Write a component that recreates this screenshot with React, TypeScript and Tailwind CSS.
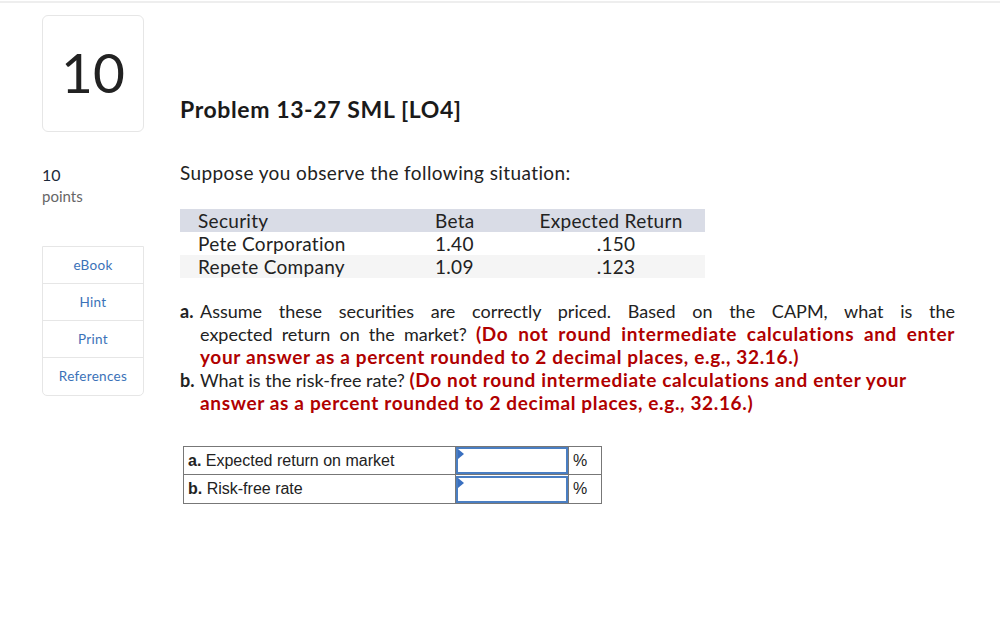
import React from 'react'

const sans = { fontFamily: 'Lato, "Open Sans", sans-serif' }
const arial = { fontFamily: '"Liberation Sans", Arial, sans-serif' }

const rows = [
  { name: 'Pete Corporation', beta: '1.40', ret: '.150', bg: 'bg-white' },
  { name: 'Repete Company', beta: '1.09', ret: '.123', bg: 'bg-[#f5f5f5]' },
]

const tools = ['eBook', 'Hint', 'Print', 'References']

// full lines are stretched edge to edge, as in the original justified paragraph
const line = 'h-[23px] whitespace-nowrap'
const full = `${line} text-justify [text-align-last:justify]`
const red = 'font-bold text-[#b00000] text-[19px] leading-[20px] tracking-[0.65px]'

function AnswerRow({ tag, label, last }: { tag: string; label: string; last?: boolean }) {
  return (
    <div className={`flex h-[28px] ${last ? '' : 'border-b border-[#777]'}`}>
      <div className="w-[272px] border-r border-[#777] px-[4px] flex items-center text-[16px] text-[#222]">
        <b>{tag}</b>&nbsp;{label}
      </div>
      <div className="w-[113px] border-r border-[#777] flex items-center">
        <div className="relative h-[27px] w-full border-2 border-[#4a7ec2] bg-white">
          <span className="absolute left-0 top-0 w-0 h-0 border-t-[5px] border-b-[5px] border-l-[6px] border-t-transparent border-b-transparent border-l-[#3a70c0]" />
        </div>
      </div>
      <div className="flex-1 flex items-center px-[4px] text-[16px] text-[#222]">%</div>
    </div>
  )
}

export default function App() {
  return (
    <div className="w-[1000px] h-[623px] bg-white border-t-2 border-[#eee] mt-[1px]" style={sans}>
      <div className="flex pt-[12px]">
        <div className="w-[180px] pl-[42px]">
          <div className="w-[102px] h-[117px] rounded-[6px] border border-[#e6e6e6] flex items-center justify-center text-[55px] text-[#222] pb-[2px]">
            10
          </div>
        </div>
        <h1 className="self-end pb-[6px] text-[23px] tracking-[0.6px] font-bold text-[#1a1a1a]">Problem 13-27 SML [LO4]</h1>
      </div>

      <div className="flex mt-[33px]">
        <div className="w-[180px] pl-[42px] shrink-0">
          <div className="text-[16px] leading-[20px] text-[#1c2a3a]">10</div>
          <div className="text-[15px] leading-[22px] text-[#666]">points</div>
          <div className="mt-[39px] w-[102px] border border-[#e6e6e6] rounded-b-[5px]">
            {tools.map((t, i) => (
              <div
                key={t}
                className={`h-[37px] flex items-center justify-center text-[13.5px] tracking-[0.3px] text-[#3b72b8] ${i < tools.length - 1 ? 'border-b border-[#e6e6e6]' : ''}`}
              >
                {t}
              </div>
            ))}
          </div>
        </div>

        <div className="flex-1 pr-[45px]">
          <p className="text-[19px] tracking-[0.4px] leading-[24px] text-[#222] -mt-[4px]">Suppose you observe the following situation:</p>

          <div className="mt-[24px] w-[525px] text-[19px] tracking-[0.3px] leading-[23px] text-[#222]">
            <div className="flex bg-[#d9dce6]">
              <div className="w-[255px] pl-[18px]">Security</div>
              <div className="w-[100px]">Beta</div>
              <div className="flex-1 text-center pr-[18px]">Expected Return</div>
            </div>
            {rows.map(r => (
              <div key={r.name} className={`flex ${r.bg}`}>
                <div className="w-[255px] pl-[18px]">{r.name}</div>
                <div className="w-[100px]">{r.beta}</div>
                <div className="flex-1 text-center pr-[8px]">{r.ret}</div>
              </div>
            ))}
          </div>

          <div className="mt-[22px] text-[18px] leading-[23px] text-[#222]">
            <div className="flex">
              <span className="w-[20px] shrink-0 font-bold">a.</span>
              <div className="flex-1">
                <div className={full}>Assume these securities are correctly priced. Based on the CAPM, what is the</div>
                <div className={full}>
                  expected return on the market? <span className={red}>(Do not round intermediate calculations and enter</span>
                </div>
                <div className={line}>
                  <span className={red}>your answer as a percent rounded to 2 decimal places, e.g., 32.16.)</span>
                </div>
              </div>
            </div>
            <div className="flex">
              <span className="w-[20px] shrink-0 font-bold">b.</span>
              <div className="flex-1">
                <div className={line}>
                  What is the risk-free rate? <span className={red}>(Do not round intermediate calculations and enter your</span>
                </div>
                <div className={line}>
                  <span className={red}>answer as a percent rounded to 2 decimal places, e.g., 32.16.)</span>
                </div>
              </div>
            </div>
          </div>

          <div className="mt-[31px] ml-[3px] w-[419px] border border-[#777]" style={arial}>
            <AnswerRow tag="a." label="Expected return on market" />
            <AnswerRow tag="b." label="Risk-free rate" last />
          </div>
        </div>
      </div>
    </div>
  )
}
